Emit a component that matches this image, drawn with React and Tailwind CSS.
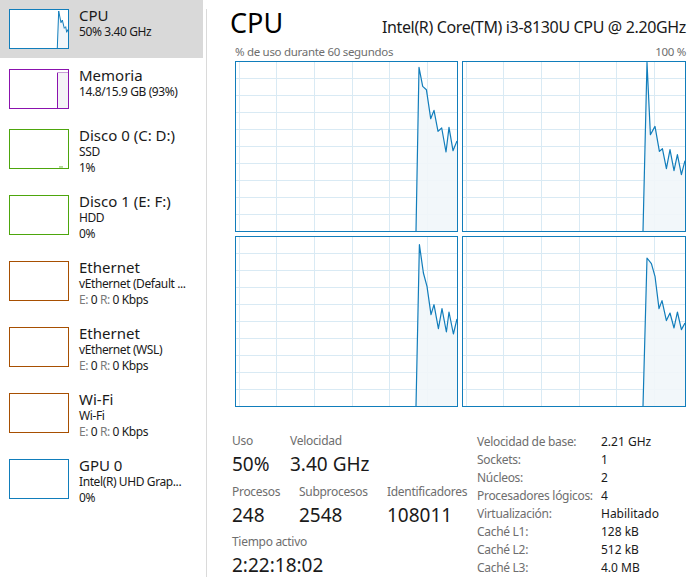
import React from "react";

const BLUE = "#117dbb";

const cores = [
  {
    w: 221,
    pts: [[180, 169], [183, 5.4], [186.7, 24.4], [190.4, 27.7], [194.7, 56.7], [198, 48.4], [202, 69.4], [205.7, 66], [210, 90], [213, 65.4], [217, 88.7], [221, 79]],
  },
  {
    w: 222,
    pts: [[180, 169], [184, 0.5], [187.4, 72.7], [192, 64.4], [196.4, 89.4], [199.4, 86.7], [203.4, 106.7], [207, 87.7], [211, 108.7], [214.4, 92.7], [218.4, 112.7], [222, 98.7]],
  },
  {
    w: 221,
    pts: [[180, 169], [183.4, 7.7], [187.4, 36], [191, 49.4], [195, 77.7], [198, 67.7], [202.4, 91.7], [206, 71.7], [210.4, 95], [213, 75], [217.4, 97], [221, 82]],
  },
  {
    w: 222,
    pts: [[180, 169], [184, 21], [188.4, 26.6], [192, 39.3], [196, 71.6], [199, 63.6], [203.4, 83.6], [207, 76], [211, 91], [214.4, 75], [218.4, 92.6], [222, 86]],
  },
];

function CoreChart({ w, pts }) {
  const h = 169;
  const line = pts.map((p) => p.join(",")).join(" ");
  const area = `${line} ${pts[pts.length - 1][0]},${h} ${pts[0][0]},${h}`;
  return (
    <div className="border border-[#117dbb] bg-white">
      <svg width={w} height={h} viewBox={`0 0 ${w} ${h}`} className="block">
        {[3, 40, 78, 116, 153, 191].map((x) => (
          <line key={"v" + x} x1={x + 0.5} x2={x + 0.5} y1="0" y2={h} stroke="#d9eaf4" strokeWidth="1" />
        ))}
        {[16, 33, 50, 67, 84, 101, 118, 135, 152].map((y) => (
          <line key={"h" + y} x1="0" x2={w} y1={y + 0.5} y2={y + 0.5} stroke="#d9eaf4" strokeWidth="1" />
        ))}
        <polygon points={area} fill="#f1f6fa" fillOpacity="0.9" />
        <polyline points={line} fill="none" stroke={BLUE} strokeWidth="1.2" strokeLinejoin="round" />
      </svg>
    </div>
  );
}

function Thumb({ color, children }) {
  return (
    <div className="h-[40px] w-[60px] shrink-0 border bg-white" style={{ borderColor: color }}>
      <svg width="58" height="38" viewBox="0 0 58 38" className="block">
        {children}
      </svg>
    </div>
  );
}

function NetLine() {
  return (
    <div>
      <span className="text-[#7a7a7a]">E: </span>0 <span className="text-[#7a7a7a]">R: </span>0 Kbps
    </div>
  );
}

const items = [
  {
    title: "CPU",
    color: BLUE,
    lines: ["50% 3.40 GHz"],
    selected: true,
    h: 58,
    graph: (
      <>
        <polygon points="47.3,38 48.7,1 51,12.7 52.3,10 54.3,18.3 55.7,16.7 56.7,22.3 58,19.3 58,38" fill="#f1f6fa" />
        <polyline points="47.3,38 48.7,1 51,12.7 52.3,10 54.3,18.3 55.7,16.7 56.7,22.3 58,19.3" fill="none" stroke={BLUE} strokeWidth="1" />
      </>
    ),
  },
  {
    title: "Memoria",
    color: "#8b12ae",
    lines: ["14.8/15.9 GB (93%)"],
    h: 60,
    graph: (
      <>
        <rect x="47" y="2" width="11" height="36" fill="#f4f2f6" />
        <line x1="47.5" y1="2" x2="47.5" y2="38" stroke="#8b12ae" strokeWidth="1" />
        <line x1="47" y1="2.5" x2="58" y2="2.5" stroke="#c99bd8" strokeWidth="1" />
      </>
    ),
  },
  {
    title: "Disco 0 (C: D:)",
    color: "#4da60c",
    lines: ["SSD", "1%"],
    h: 66,
    graph: <polyline points="49,37.3 50,36.6 51,37.3 52,36.6 53,37.3" fill="none" stroke="#4da60c" strokeWidth="0.8" />,
  },
  { title: "Disco 1 (E: F:)", color: "#4da60c", lines: ["HDD", "0%"], h: 66 },
  { title: "Ethernet", color: "#a74f01", lines: ["vEthernet (Default ...", "net"], h: 66 },
  { title: "Ethernet", color: "#a74f01", lines: ["vEthernet (WSL)", "net"], h: 66 },
  { title: "Wi-Fi", color: "#a74f01", lines: ["Wi-Fi", "net"], h: 66 },
  { title: "GPU 0", color: BLUE, lines: ["Intel(R) UHD Grap...", "0%"], h: 66 },
];

function SideItem({ item }) {
  return (
    <div
      className={`flex pl-[9px] pt-[9px] ${item.selected ? "mb-[2px] bg-[#d9d9d9]" : ""}`}
      style={{ height: item.h }}
    >
      <Thumb color={item.color}>{item.graph}</Thumb>
      <div className="ml-[10px] -mt-[3px] min-w-0 text-[#1a1a1a]">
        <div className="text-[15px] leading-[18px]">{item.title}</div>
        <div className="text-[12px] leading-[15.5px] tracking-[-0.4px]">
          {item.lines.map((l, i) => (l === "net" ? <NetLine key={i} /> : <div key={i} className="whitespace-nowrap">{l}</div>))}
        </div>
      </div>
    </div>
  );
}

function Stat({ label, value, w }) {
  return (
    <div style={{ width: w }}>
      <div className="text-[12px] leading-[16px] tracking-[-0.3px] text-[#6e6e6e]">{label}</div>
      <div className="mt-[3px] text-[19px] leading-[24px] text-[#1a1a1a]">{value}</div>
    </div>
  );
}

const specs = [
  ["Velocidad de base:", "2.21 GHz"],
  ["Sockets:", "1"],
  ["Núcleos:", "2"],
  ["Procesadores lógicos:", "4"],
  ["Virtualización:", "Habilitado"],
  ["Caché L1:", "128 kB"],
  ["Caché L2:", "512 kB"],
  ["Caché L3:", "4.0 MB"],
];

export default function App() {
  return (
    <div className="flex h-screen w-full overflow-hidden bg-white font-['Noto_Sans','Open_Sans',sans-serif]">
      <aside className="w-[203px] shrink-0">
        {items.map((it, i) => (
          <SideItem key={i} item={it} />
        ))}
      </aside>
      <div className="ml-[3px] mt-[9px] w-px shrink-0 bg-[#dadada]" />
      <main className="flex-1 pl-[28px]">
        <div className="-ml-[5px] flex w-[456px] items-baseline justify-between pt-[7px]">
          <h1 className="text-[27px] leading-[32px] text-black">CPU</h1>
          <div className="text-[16px] leading-[22px] tracking-[-0.35px] text-[#1a1a1a]">Intel(R) Core(TM) i3-8130U CPU @ 2.20GHz</div>
        </div>
        <div className="mt-[6px] flex w-[451px] justify-between text-[11.5px] leading-[14px] tracking-[-0.3px] text-[#6e6e6e]">
          <span>% de uso durante 60 segundos</span>
          <span>100 %</span>
        </div>
        <div className="mt-[2px] grid grid-cols-[223px_224px] gap-[4px]">
          {cores.map((c, i) => (
            <CoreChart key={i} {...c} />
          ))}
        </div>
        <div className="-ml-[3px] mt-[26px] flex">
          <div className="w-[245px]">
            <div className="flex">
              <Stat label="Uso" value="50%" w={58} />
              <Stat label="Velocidad" value="3.40 GHz" w={120} />
            </div>
            <div className="mt-[8px] flex">
              <Stat label="Procesos" value="248" w={67} />
              <Stat label="Subprocesos" value="2548" w={88} />
              <Stat label="Identificadores" value="108011" w={90} />
            </div>
            <div className="mt-[7px] flex">
              <Stat label="Tiempo activo" value="2:22:18:02" w={200} />
            </div>
          </div>
          <div className="mt-[0px] grid grid-cols-[124px_auto] text-[12px] leading-[17.75px]">
            {specs.map(([k, v]) => (
              <React.Fragment key={k}>
                <div className="tracking-[-0.3px] text-[#6e6e6e]">{k}</div>
                <div className="text-[#1a1a1a]">{v}</div>
              </React.Fragment>
            ))}
          </div>
        </div>
      </main>
    </div>
  );
}
